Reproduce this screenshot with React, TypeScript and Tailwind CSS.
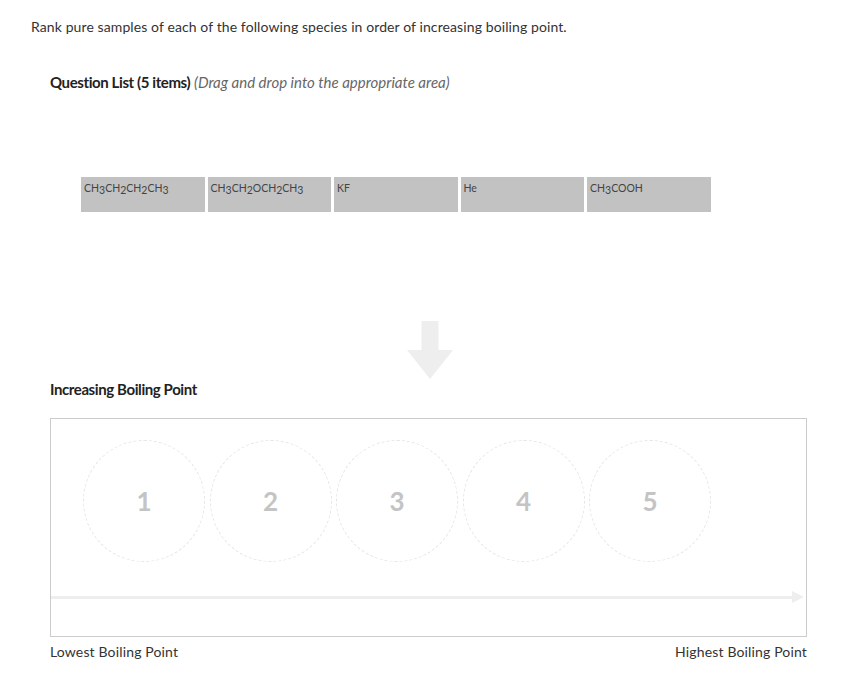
const ITEMS: Array<Array<[string, string?]>> = [
  [["CH"], ["3", "s"], ["CH"], ["2", "s"], ["CH"], ["2", "s"], ["CH"], ["3", "s"]],
  [["CH"], ["3", "s"], ["CH"], ["2", "s"], ["OCH"], ["2", "s"], ["CH"], ["3", "s"]],
  [["KF"]],
  [["He"]],
  [["CH"], ["3", "s"], ["COOH"]],
];

function Formula({ parts }: { parts: Array<[string, string?]> }) {
  return (
    <span>
      {parts.map(([t, kind], i) =>
        kind === "s" ? (
          <span key={i} className="relative top-[2px]">
            {t}
          </span>
        ) : (
          <span key={i}>{t}</span>
        )
      )}
    </span>
  );
}

function DownArrow() {
  return (
    <svg width="48" height="58" viewBox="0 0 48 58">
      <path d="M15.5 0 H32.5 V29 H47 L24 58 L1 29 H15.5 Z" fill="#eeeeee" />
    </svg>
  );
}

function Slot({ n }: { n: number }) {
  return (
    <div className="flex h-[122px] w-[122px] items-center justify-center rounded-full border border-dashed border-[#e6e6e6]">
      <span className="text-[26px] font-bold text-[#c4c4c4]">{n}</span>
    </div>
  );
}

export default function App() {
  return (
    <div className="min-h-[680px] bg-white pt-[19px] text-[#333] [font-family:Lato,'Open_Sans',sans-serif]">
      <p className="pl-[31px] text-[14px] leading-4 tracking-[0.1px]">
        Rank pure samples of each of the following species in order of increasing boiling point.
      </p>

      <div className="mt-[37px] pl-[50px] text-[15px] leading-5">
        <span className="font-bold tracking-[-0.4px] text-[#222]">Question List (5 items)</span>{" "}
        <span className="italic text-[#666]">(Drag and drop into the appropriate area)</span>
      </div>

      <div className="mt-[85px] flex gap-[3px] pl-[81px]">
        {ITEMS.map((parts, i) => (
          <div
            key={i}
            className="h-[35px] w-[123.5px] bg-[#c2c2c2] px-[3px] pt-[3px] text-[10.5px] leading-4 text-[#444]"
          >
            <Formula parts={parts} />
          </div>
        ))}
      </div>

      <div className="mt-[109px] flex justify-center pl-[18px]">
        <DownArrow />
      </div>

      <div className="pl-[50px] text-[15px] font-bold leading-5 tracking-[-0.4px] text-[#222]">
        Increasing Boiling Point
      </div>

      <div className="ml-[50px] mt-[19px] w-[757px] border border-[#cccccc]">
        <div className="flex gap-[4.5px] pl-[32px] pt-[21px]">
          {[1, 2, 3, 4, 5].map((n) => (
            <Slot key={n} n={n} />
          ))}
        </div>
        <div className="mt-[29px] flex items-center">
          <div className="h-[3px] flex-1 bg-[#eeeeee]" />
          <svg width="12" height="12" viewBox="0 0 12 12" className="mr-[2px]">
            <path d="M0 0 L12 6 L0 12 Z" fill="#eeeeee" />
          </svg>
        </div>
        <div className="h-[33px]" />
      </div>

      <div className="ml-[50px] mt-[7px] flex w-[757px] justify-between text-[14px] leading-4 tracking-[0.15px] text-[#333]">
        <span>Lowest Boiling Point</span>
        <span>Highest Boiling Point</span>
      </div>
    </div>
  );
}
